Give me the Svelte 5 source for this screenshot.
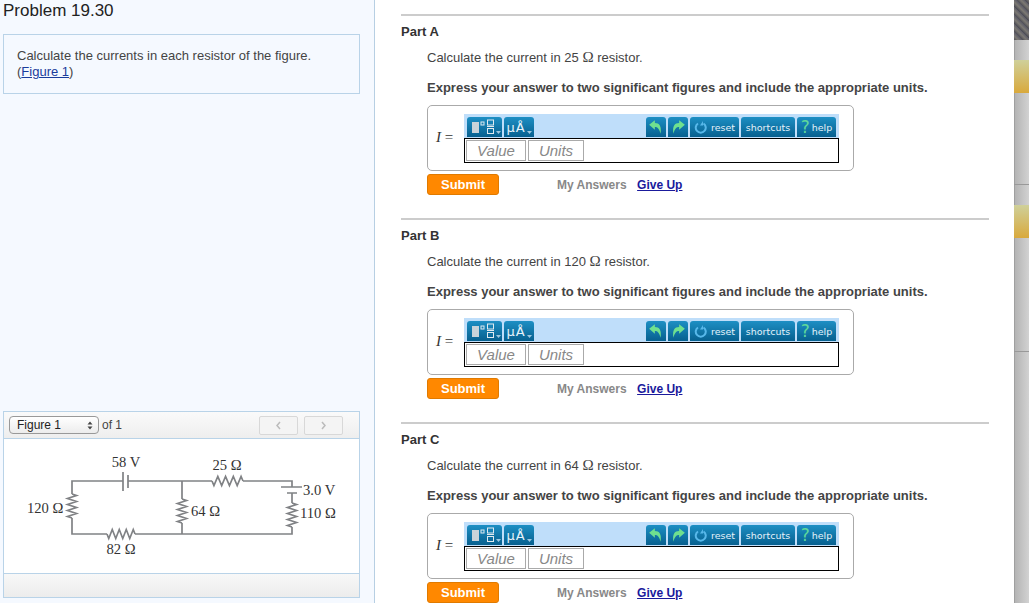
<script>
  const parts = [
    { name: 'Part A', ohms: 25 },
    { name: 'Part B', ohms: 120 },
    { name: 'Part C', ohms: 64 }
  ];

  // zigzag resistor, n teeth, from a to b along one axis
  function zig(x0, y0, x1, y1, amp, n = 4) {
    const pts = [[x0, y0]];
    const steps = n * 2;
    for (let i = 0; i < steps; i++) {
      const t = (i + 0.5) / steps;
      const s = i % 2 === 0 ? 1 : -1;
      const x = x0 + (x1 - x0) * t + (y0 === y1 ? 0 : s * amp);
      const y = y0 + (y1 - y0) * t + (y0 === y1 ? s * amp : 0);
      pts.push([x, y]);
    }
    pts.push([x1, y1]);
    return pts.map((p) => p.join(',')).join(' ');
  }
</script>

<div class="page">
  <aside class="left">
    <h1>Problem 19.30</h1>
    <div class="intro">
      Calculate the currents in each resistor of the figure.<br />
      (<a href="#fig">Figure 1</a>)
    </div>

    <div class="figure">
      <div class="fig-bar">
        <div class="select">
          <span>Figure 1</span>
          <svg width="6" height="9" viewBox="0 0 6 9"><path d="M3 0.5 5.5 3.5H0.5ZM3 8.5 0.5 5.5H5.5Z" fill="#444" /></svg>
        </div>
        <span class="of">of 1</span>
        <div class="pager">
          <button aria-label="previous"><svg width="7" height="9" viewBox="0 0 7 9"><path d="M5 1 2 4.5 5 8" fill="none" stroke="#bbb" stroke-width="1.5" /></svg></button>
          <button aria-label="next"><svg width="7" height="9" viewBox="0 0 7 9"><path d="M2 1 5 4.5 2 8" fill="none" stroke="#bbb" stroke-width="1.5" /></svg></button>
        </div>
      </div>
      <svg class="circuit" viewBox="4 439 355 134" width="355" height="134">
        <g fill="none" stroke="#808285" stroke-width="1.7">
          <path d="M72 494V481H123M128 481H212M243 481H292V487M292 493V503M292 527V534H135M107 534H72V518" />
          <path d="M182 481V499M182 523V534" />
          <path d="M123 472V491M128 475V488" />
          <path d="M281 487H302M287 493H297" />
          <polyline points={zig(212, 481, 243, 481, 4.5)} />
          <polyline points={zig(107, 534, 135, 534, 4.5)} />
          <polyline points={zig(72, 494, 72, 518, 4.5)} />
          <polyline points={zig(182, 499, 182, 523, 4.5)} />
          <polyline points={zig(292, 503, 292, 527, 4.5)} />
        </g>
        <g class="labels">
          <text x="126" y="467" text-anchor="middle">58 V</text>
          <text x="227" y="470" text-anchor="middle">25 Ω</text>
          <text x="27" y="513">120 Ω</text>
          <text x="191" y="516">64 Ω</text>
          <text x="303" y="495">3.0 V</text>
          <text x="300" y="518">110 Ω</text>
          <text x="121" y="554" text-anchor="middle">82 Ω</text>
        </g>
      </svg>
      <div class="fig-foot"></div>
    </div>
  </aside>

  <main class="right">
    {#each parts as part}
      <section class="part">
        <h2>{part.name}</h2>
        <p class="question">Calculate the current in {part.ohms} <span class="omega">Ω</span> resistor.</p>
        <p class="express">Express your answer to two significant figures and include the appropriate units.</p>

        <div class="editor">
          <div class="var"><i>I</i> =</div>
          <div class="answer">
            <div class="tools">
              <button class="tool tpl" aria-label="templates">
                <svg width="32" height="18" viewBox="0 0 32 18">
                  <rect x="3" y="4" width="7" height="11" fill="#c9d3d9" />
                  <rect x="12" y="4" width="3" height="3" fill="none" stroke="#dfeaf0" />
                  <path d="M18 8.5h7" stroke="#dfeaf0" />
                  <rect x="18.5" y="2" width="6" height="5" fill="none" stroke="#dfeaf0" />
                  <rect x="18.5" y="10.5" width="6" height="5" fill="none" stroke="#dfeaf0" />
                  <path d="M27 13h5l-2.5 3z" fill="#9fc8e0" />
                </svg>
              </button>
              <button class="tool units" aria-label="units">
                <span>μÅ</span>
                <svg width="5" height="3" viewBox="0 0 5 3"><path d="M0 0h5L2.500 3z" fill="#9fc8e0" /></svg>
              </button>
              <div class="spacer"></div>
              <button class="tool arrow" aria-label="undo">
                <svg width="16" height="16" viewBox="0 0 14 14"><path d="M1 5 6 1V3.500C10 3.500 12 6 11 13 9.800 8.500 8.500 7 6 7V9.500Z" fill="#6fe08f" /></svg>
              </button>
              <button class="tool arrow" aria-label="redo">
                <svg width="16" height="16" viewBox="0 0 14 14"><path d="M13 5 8 1V3.500C4 3.500 2 6 3 13 4.200 8.500 5.500 7 8 7V9.500Z" fill="#6fe08f" /></svg>
              </button>
              <button class="tool text reset">
                <svg width="13" height="14" viewBox="0 0 13 14"><path d="M4 3.500A5 5 0 1 0 9.500 3.500" fill="none" stroke="#58b8ea" stroke-width="2" /><path d="M9 1v4.500h-3z" fill="#58b8ea" /></svg>
                reset
              </button>
              <button class="tool text shortcuts">shortcuts</button>
              <button class="tool text help"><b>?</b> help</button>
            </div>
            <div class="field">
              <span class="ph value">Value</span>
              <span class="ph unit">Units</span>
            </div>
          </div>
        </div>

        <div class="actions">
          <button class="submit">Submit</button>
          <span class="my">My Answers</span>
          <a href="#give-up" class="give">Give Up</a>
        </div>
      </section>
    {/each}
  </main>

  <div class="strip">
    <div class="photo"></div>
    <div class="ad first"></div>
    <div class="ad second"></div>
    <div class="rule one"></div>
    <div class="rule two"></div>
  </div>
</div>

<style>
  :global(body) {
    margin: 0;
    background: #fff;
  }

  .page {
    display: flex;
    height: 603px;
    width: 1029px;
    overflow: hidden;
    font-family: "Liberation Sans", Arial, sans-serif;
    color: #333;
  }

  .left {
    box-sizing: border-box;
    flex: none;
    width: 375px;
    height: 603px;
    padding: 0 14px 0 3px;
    background: #f5f9ff;
    border-right: 1px solid #b7cfe3;
    display: flex;
    flex-direction: column;
  }

  h1 {
    margin: 1px 0 0;
    font-size: 17px;
    font-weight: normal;
    line-height: 20px;
    color: #222;
  }

  .intro {
    box-sizing: border-box;
    height: 60px;
    margin-top: 13px;
    padding: 13px 13px;
    border: 1px solid #b9d3e8;
    font-size: 13px;
    line-height: 16px;
    color: #444;
  }

  .intro a {
    color: #1a3c9c;
  }

  .figure {
    box-sizing: border-box;
    margin-top: auto;
    margin-bottom: 5px;
    height: 187px;
    border: 1px solid #b9d3e8;
    background: #fff;
    display: flex;
    flex-direction: column;
  }

  .fig-bar {
    flex: none;
    box-sizing: border-box;
    height: 27px;
    display: flex;
    align-items: center;
    padding: 0 5px;
    background: linear-gradient(#fafafa, #eeeeee);
    border-bottom: 1px solid #b9d3e8;
    font-size: 12px;
  }

  .select {
    box-sizing: border-box;
    width: 90px;
    height: 18px;
    display: flex;
    align-items: center;
    justify-content: space-between;
    padding: 0 5px 0 7px;
    border: 1px solid #999;
    border-radius: 4px;
    background: linear-gradient(#fff, #ececec);
    font-size: 12px;
    color: #222;
  }

  .of {
    margin-left: 3px;
    color: #444;
  }

  .pager {
    margin-left: auto;
    margin-right: 11px;
    display: flex;
    gap: 6px;
  }

  .pager button {
    box-sizing: border-box;
    width: 39px;
    height: 19px;
    padding: 0;
    display: flex;
    align-items: center;
    justify-content: center;
    border: 1px solid #d8d8d8;
    border-radius: 2px;
    background: #f4f4f4;
  }

  .circuit {
    flex: none;
    display: block;
  }

  .labels text {
    font-family: "Liberation Serif", serif;
    font-size: 14.6px;
    fill: #333;
  }

  .fig-foot {
    flex: 1;
    border-top: 1px solid #b9d3e8;
    background: linear-gradient(#f8f8f8, #ececec);
  }

  .right {
    flex: none;
    width: 614px;
    padding: 14px 0 0 26px;
    box-sizing: border-box;
  }

  .part {
    height: 204px;
    box-sizing: border-box;
    border-top: 2px solid #ccc;
    padding-left: 26px;
  }

  h2 {
    margin: 0 0 0 -26px;
    padding-top: 8px;
    font-size: 13px;
    line-height: 16px;
    font-weight: bold;
    color: #333;
  }

  .question {
    margin: 10px 0 0;
    font-size: 13px;
    line-height: 16px;
    color: #444;
  }

  .omega {
    font-family: "Liberation Serif", serif;
    font-size: 15px;
    line-height: 1;
  }

  .express {
    margin: 14px 0 0;
    font-size: 13px;
    line-height: 16px;
    font-weight: bold;
    color: #444;
  }

  .editor {
    box-sizing: border-box;
    width: 427px;
    height: 66px;
    margin-top: 9px;
    padding: 8px 0 0 0;
    border: 1px solid #aaa;
    border-radius: 5px;
    display: flex;
  }

  .var {
    flex: none;
    width: 36px;
    padding: 15px 0 0 8px;
    box-sizing: border-box;
    font-family: "Liberation Serif", serif;
    font-size: 15px;
    line-height: 16px;
    color: #333;
  }

  .answer {
    flex: none;
    width: 375px;
  }

  .tools {
    box-sizing: border-box;
    height: 24px;
    padding: 3px 3px 0 3px;
    background: #bfdefa;
    display: flex;
    gap: 2px;
  }

  .spacer {
    flex: 1;
  }

  .tool {
    box-sizing: border-box;
    height: 20px;
    padding: 0;
    border: 0;
    border-radius: 3px 3px 0 0;
    background: linear-gradient(#1d8fc4, #07608f);
    color: #e4f2fa;
    display: flex;
    align-items: center;
    justify-content: center;
    font-family: "DejaVu Sans", sans-serif;
    font-size: 9.5px;
  }

  .tpl {
    width: 35px;
  }

  .units {
    width: 30px;
    gap: 1px;
    font-size: 13px;
    letter-spacing: 1px;
    align-items: center;
  }

  .units svg {
    align-self: flex-end;
    margin-bottom: 3px;
  }

  .arrow {
    width: 20px;
  }

  .text {
    gap: 4px;
  }

  .reset {
    width: 49px;
  }

  .shortcuts {
    width: 54px;
  }

  .text.help {
    width: 39px;
    gap: 2px;
  }

  .help b {
    color: #5fd89a;
    font-size: 17px;
    font-weight: normal;
    line-height: 16px;
  }

  .field {
    box-sizing: border-box;
    height: 25px;
    border: 1px solid #000;
    padding: 1px;
    display: flex;
    gap: 2px;
  }

  .ph {
    box-sizing: border-box;
    height: 21px;
    border: 1px solid #aaa;
    font-size: 15px;
    font-style: italic;
    line-height: 19px;
    text-align: center;
    color: #888;
  }

  .value {
    width: 60px;
  }

  .unit {
    width: 56px;
  }

  .actions {
    margin-top: 3px;
    display: flex;
    align-items: center;
    height: 21px;
    font-size: 12px;
    font-weight: bold;
  }

  .submit {
    box-sizing: border-box;
    width: 72px;
    height: 21px;
    padding: 0;
    border: 1px solid #e07a00;
    border-radius: 3px;
    background: #ff8800;
    color: #fff;
    font-family: inherit;
    font-size: 13px;
    font-weight: bold;
  }

  .my {
    margin-left: 58px;
    color: #888;
  }

  .give {
    margin-left: 10.5px;
    color: #1a1a9c;
  }

  .strip {
    flex: none;
    width: 15px;
    margin-left: 25px;
    height: 603px;
    position: relative;
    background: linear-gradient(90deg, #8a8a8a 0, #b4b4b4 1px, #d2d2d2 100%);
  }

  .photo {
    height: 40px;
    background: repeating-linear-gradient(45deg, #4d4d55, #7d7a74 3px, #5a5a66 6px);
  }

  .ad {
    position: absolute;
    left: 0;
    right: 0;
    height: 33px;
    background: linear-gradient(#cfd09a, #d9a93c);
  }

  .first {
    top: 60px;
  }

  .second {
    top: 205px;
  }

  .rule {
    position: absolute;
    left: 0;
    right: 0;
    height: 1px;
    background: #999;
  }

  .one {
    top: 184px;
  }

  .two {
    top: 351px;
  }
</style>
